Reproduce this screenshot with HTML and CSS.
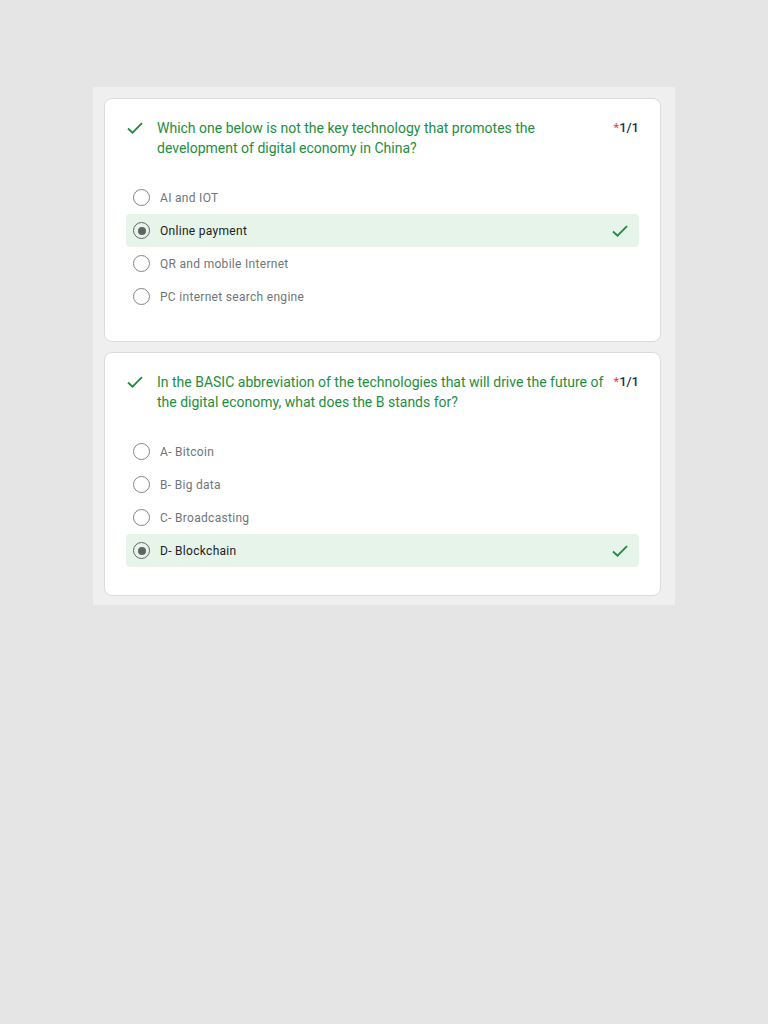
FILE: index.html
```html
<!DOCTYPE html>
<html lang="en">
<head>
<meta charset="utf-8">
<title>Quiz results</title>
<link rel="stylesheet" href="styles.css">
</head>
<body>
<div class="panel">
  <div class="card">
    <div class="qhead">
      <span class="qcheck"><svg width="16" height="12" viewBox="0 0 16 12"><path d="M1 6.5l4.5 4.2L15 1.2" fill="none" stroke="#1e8e3e" stroke-width="1.8"/></svg></span>
      <div class="qtext">Which one below is not the key technology that promotes the development of digital economy in China?</div>
      <div class="score"><span class="req">*</span>1/1</div>
    </div>
    <div class="options">
      <div class="opt"><span class="radio"></span><span class="label">AI and IOT</span></div>
      <div class="opt sel"><span class="radio on"></span><span class="label">Online payment</span><span class="okcheck"><svg width="16" height="12" viewBox="0 0 16 12"><path d="M1 6.5l4.5 4.2L15 1.2" fill="none" stroke="#1e8e3e" stroke-width="1.8"/></svg></span></div>
      <div class="opt"><span class="radio"></span><span class="label">QR and mobile Internet</span></div>
      <div class="opt"><span class="radio"></span><span class="label">PC internet search engine</span></div>
    </div>
  </div>
  <div class="card">
    <div class="qhead">
      <span class="qcheck"><svg width="16" height="12" viewBox="0 0 16 12"><path d="M1 6.5l4.5 4.2L15 1.2" fill="none" stroke="#1e8e3e" stroke-width="1.8"/></svg></span>
      <div class="qtext">In the BASIC abbreviation of the technologies that will drive the future of the digital economy, what does the B stands for?</div>
      <div class="score"><span class="req">*</span>1/1</div>
    </div>
    <div class="options">
      <div class="opt"><span class="radio"></span><span class="label">A- Bitcoin</span></div>
      <div class="opt"><span class="radio"></span><span class="label">B- Big data</span></div>
      <div class="opt"><span class="radio"></span><span class="label">C- Broadcasting</span></div>
      <div class="opt sel"><span class="radio on"></span><span class="label">D- Blockchain</span><span class="okcheck"><svg width="16" height="12" viewBox="0 0 16 12"><path d="M1 6.5l4.5 4.2L15 1.2" fill="none" stroke="#1e8e3e" stroke-width="1.8"/></svg></span></div>
    </div>
  </div>
</div>
</body>
</html>
```
FILE: styles.css
```css
html, body {
  margin: 0;
  padding: 0;
  background: #e5e5e5;
}
body {
  font-family: Roboto, "Liberation Sans", Arial, sans-serif;
  height: 1024px;
}
.panel {
  margin: 87px 0 0 93px;
  width: 582px;
  box-sizing: border-box;
  padding: 11px 14px 9px 11px;
  background: #efefef;
  display: flex;
  flex-direction: column;
  gap: 10px;
}
.card {
  background: #fff;
  border: 1px solid #dadce0;
  border-radius: 8px;
  padding: 19px 21px 28px 21px;
}
.qhead {
  display: flex;
  align-items: flex-start;
}
.qcheck {
  width: 31px;
  flex: none;
  height: 20px;
  display: flex;
  align-items: center;
  padding-left: 1px;
  box-sizing: border-box;
}
.qcheck svg { display: block; }
.qtext {
  flex: none;
  width: 447px;
  font-size: 14px;
  line-height: 20px;
  color: #1e8e3e;
}
.score {
  margin-left: auto;
  font-size: 13px;
  line-height: 20px;
  color: #1f2d4d;
  font-weight: 500;
}
.req {
  color: #e8453c;
  font-weight: 400;
}
.options {
  margin-top: 23px;
  display: flex;
  flex-direction: column;
}
.opt {
  height: 33px;
  display: flex;
  align-items: center;
  padding: 0 11px 0 7px;
  border-radius: 4px;
}
.opt.sel {
  background: #e6f4ea;
}
.radio {
  width: 15px;
  height: 15px;
  border: 1.6px solid #80868b;
  border-radius: 50%;
  flex: none;
  position: relative;
}
.radio.on {
  border-color: #5f6368;
}
.radio.on::after {
  content: "";
  position: absolute;
  left: 3.5px;
  top: 3.5px;
  width: 8px;
  height: 8px;
  border-radius: 50%;
  background: #5f6368;
}
.label {
  margin-left: 10px;
  font-size: 12px;
  letter-spacing: 0.3px;
  color: #70757a;
}
.opt.sel .label {
  color: #202124;
}
.okcheck {
  margin-left: auto;
  display: flex;
}
.okcheck svg { display: block; }
```
